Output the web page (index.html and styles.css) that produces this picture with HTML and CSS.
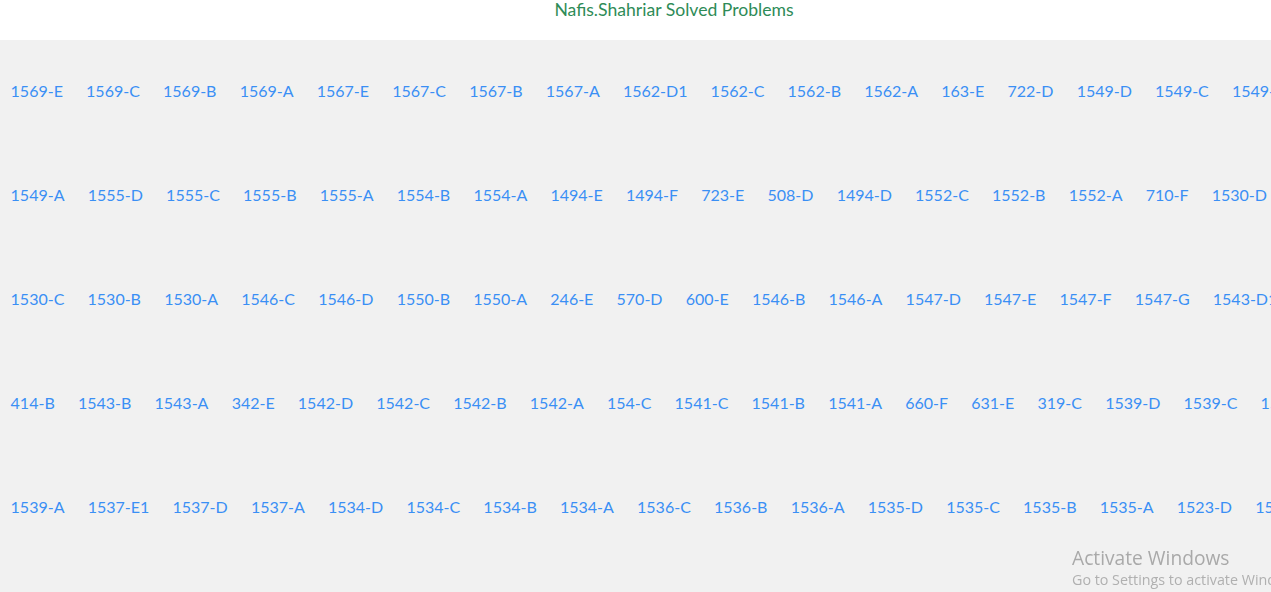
FILE: index.html
```html
<!DOCTYPE html>
<html lang="en">
<head>
<meta charset="utf-8">
<title>Nafis.Shahriar Solved Problems</title>
<link rel="stylesheet" href="styles.css">
</head>
<body>
<header class="page-header">
  <h1 class="title">Nafis.Shahriar Solved Problems</h1>
</header>
<main class="problems">
  <div class="row">
    <a class="problem" href="#">1569-E</a><a class="problem" href="#">1569-C</a><a class="problem" href="#">1569-B</a><a class="problem" href="#">1569-A</a><a class="problem" href="#">1567-E</a><a class="problem" href="#">1567-C</a><a class="problem" href="#">1567-B</a><a class="problem" href="#">1567-A</a><a class="problem" href="#">1562-D1</a><a class="problem" href="#">1562-C</a><a class="problem" href="#">1562-B</a><a class="problem" href="#">1562-A</a><a class="problem" href="#">163-E</a><a class="problem" href="#">722-D</a><a class="problem" href="#">1549-D</a><a class="problem" href="#">1549-C</a><a class="problem" href="#">1549-B</a><a class="problem" href="#">1549-B</a>
  </div>
  <div class="row">
    <a class="problem" href="#">1549-A</a><a class="problem" href="#">1555-D</a><a class="problem" href="#">1555-C</a><a class="problem" href="#">1555-B</a><a class="problem" href="#">1555-A</a><a class="problem" href="#">1554-B</a><a class="problem" href="#">1554-A</a><a class="problem" href="#">1494-E</a><a class="problem" href="#">1494-F</a><a class="problem" href="#">723-E</a><a class="problem" href="#">508-D</a><a class="problem" href="#">1494-D</a><a class="problem" href="#">1552-C</a><a class="problem" href="#">1552-B</a><a class="problem" href="#">1552-A</a><a class="problem" href="#">710-F</a><a class="problem" href="#">1530-D</a><a class="problem" href="#">1530-E</a>
  </div>
  <div class="row">
    <a class="problem" href="#">1530-C</a><a class="problem" href="#">1530-B</a><a class="problem" href="#">1530-A</a><a class="problem" href="#">1546-C</a><a class="problem" href="#">1546-D</a><a class="problem" href="#">1550-B</a><a class="problem" href="#">1550-A</a><a class="problem" href="#">246-E</a><a class="problem" href="#">570-D</a><a class="problem" href="#">600-E</a><a class="problem" href="#">1546-B</a><a class="problem" href="#">1546-A</a><a class="problem" href="#">1547-D</a><a class="problem" href="#">1547-E</a><a class="problem" href="#">1547-F</a><a class="problem" href="#">1547-G</a><a class="problem" href="#">1543-D1</a><a class="problem" href="#">1543-C</a>
  </div>
  <div class="row">
    <a class="problem" href="#">414-B</a><a class="problem" href="#">1543-B</a><a class="problem" href="#">1543-A</a><a class="problem" href="#">342-E</a><a class="problem" href="#">1542-D</a><a class="problem" href="#">1542-C</a><a class="problem" href="#">1542-B</a><a class="problem" href="#">1542-A</a><a class="problem" href="#">154-C</a><a class="problem" href="#">1541-C</a><a class="problem" href="#">1541-B</a><a class="problem" href="#">1541-A</a><a class="problem" href="#">660-F</a><a class="problem" href="#">631-E</a><a class="problem" href="#">319-C</a><a class="problem" href="#">1539-D</a><a class="problem" href="#">1539-C</a><a class="problem" href="#">1539-B</a>
  </div>
  <div class="row">
    <a class="problem" href="#">1539-A</a><a class="problem" href="#">1537-E1</a><a class="problem" href="#">1537-D</a><a class="problem" href="#">1537-A</a><a class="problem" href="#">1534-D</a><a class="problem" href="#">1534-C</a><a class="problem" href="#">1534-B</a><a class="problem" href="#">1534-A</a><a class="problem" href="#">1536-C</a><a class="problem" href="#">1536-B</a><a class="problem" href="#">1536-A</a><a class="problem" href="#">1535-D</a><a class="problem" href="#">1535-C</a><a class="problem" href="#">1535-B</a><a class="problem" href="#">1535-A</a><a class="problem" href="#">1523-D</a><a class="problem" href="#">1523-C</a><a class="problem" href="#">1523-B</a>
  </div>
  <div class="row">
    <a class="problem" href="#">1523-A</a><a class="problem" href="#">1526-C1</a><a class="problem" href="#">1526-B</a><a class="problem" href="#">1526-A</a>
  </div>
</main>
<div class="watermark">
  <div class="wm-title">Activate Windows</div>
  <div class="wm-sub">Go to Settings to activate Windows.</div>
</div>
</body>
</html>
```

FILE: styles.css
```css
html, body {
  margin: 0;
  padding: 0;
}

body {
  font-family: Lato, "Liberation Sans", sans-serif;
  background: #f1f1f1;
  overflow: hidden;
  height: 592px;
}

.page-header {
  background: #ffffff;
  height: 40px;
  padding-left: 77px;
  box-sizing: border-box;
  padding-top: 1px;
}

.title {
  margin: 0;
  font-size: 17.6px;
  font-weight: 400;
  line-height: 18px;
  color: #2e8b57;
  text-align: center;
}

.problems {
  background: #f1f1f1;
}

.row {
  display: flex;
  flex-wrap: nowrap;
  align-items: center;
  height: 104px;
  box-sizing: border-box;
  padding: 0 0 3px 0;
  margin-left: -1px;
  white-space: nowrap;
}

.problem {
  flex: none;
  padding: 0 11.6px;
  font-size: 16px;
  color: #3a8ff5;
  text-decoration: none;
}

.watermark {
  position: fixed;
  left: 1072px;
  top: 545px;
  white-space: nowrap;
  font-family: "Open Sans", "Noto Sans", sans-serif;
  color: #a9a9a9;
  pointer-events: none;
}

.wm-title {
  font-size: 19.2px;
  line-height: 25px;
}

.wm-sub {
  font-size: 14.3px;
  line-height: 19px;
  color: #b0b0b0;
}
```
